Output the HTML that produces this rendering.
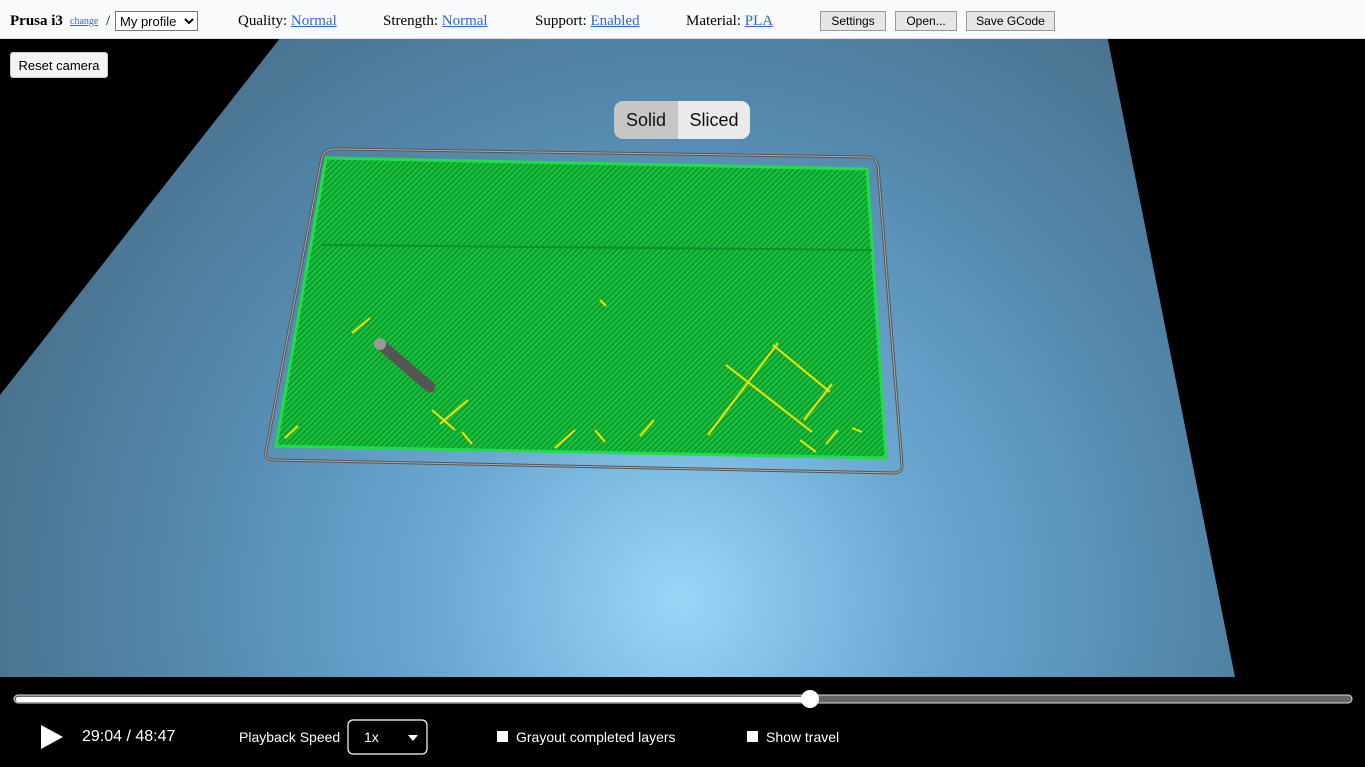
<!DOCTYPE html>
<html><head><meta charset="utf-8"><style>
body{margin:0;width:1365px;height:767px;background:#000;overflow:hidden;position:relative;font-family:"Liberation Serif",serif}
.top{position:absolute;left:0;top:0;width:1365px;height:38px;background:#f9fafc;font-size:15px;border-bottom:1px solid #ddd}
.top>span,.top>b,.top>a,.top>button,.top>select{position:absolute;top:13px;white-space:nowrap}
a{color:#3366dd;text-decoration:underline}
button{font-family:"Liberation Sans",sans-serif;font-size:12px;background:#e6e6e6;border:1px solid #999;height:20px;padding:0 4px;white-space:nowrap}
.sans{font-family:"Liberation Sans",sans-serif}
</style></head><body>
<svg width="1365" height="767" style="position:absolute;left:0;top:0">
<defs>
<radialGradient id="g" cx="680" cy="600" r="700" gradientUnits="userSpaceOnUse">
<stop offset="0" stop-color="#99d5f7"/><stop offset="0.35" stop-color="#6aa8d2"/><stop offset="0.7" stop-color="#5489ad"/><stop offset="1" stop-color="#4a7390"/></radialGradient>
<pattern id="st" width="4" height="4" patternUnits="userSpaceOnUse" patternTransform="rotate(45)"><rect width="4" height="4" fill="#18bf3c"/><rect width="1.2" height="4" fill="#0a8a28"/></pattern>
</defs>
<polygon points="310,0 1100,0 1235,677 0,677 0,395" fill="url(#g)"/>
<path d="M338,149 L868,157 Q877,158 878,167 L902,464 Q903,473 893,473 L274,460 Q264,460 266,451 L322,157 Q324,149 338,149 Z" fill="none" stroke="#555" stroke-width="3"/>
<path d="M338,149 L868,157 Q877,158 878,167 L902,464 Q903,473 893,473 L274,460 Q264,460 266,451 L322,157 Q324,149 338,149 Z" fill="none" stroke="#aaa" stroke-width="1"/>
<polygon points="326,158 867,169 886,458 276,446" fill="url(#st)" stroke="#22dd4a" stroke-width="3"/>
<line x1="322" y1="245" x2="872" y2="250" stroke="#0c8f2c" stroke-width="2"/>
<g stroke="#f2e200" stroke-width="2">
<line x1="726" y1="365" x2="812" y2="432"/><line x1="778" y1="343" x2="708" y2="435"/>
<line x1="773" y1="345" x2="830" y2="392"/><line x1="832" y1="384" x2="804" y2="420"/>
<line x1="432" y1="410" x2="455" y2="430"/><line x1="468" y1="400" x2="440" y2="424"/>
<line x1="352" y1="333" x2="370" y2="318"/><line x1="285" y1="438" x2="298" y2="426"/>
<line x1="555" y1="448" x2="575" y2="430"/><line x1="595" y1="430" x2="605" y2="442"/>
<line x1="640" y1="436" x2="654" y2="420"/><line x1="800" y1="440" x2="816" y2="452"/>
<line x1="826" y1="444" x2="838" y2="430"/><line x1="462" y1="432" x2="472" y2="444"/>
<line x1="852" y1="428" x2="862" y2="432"/><line x1="600" y1="300" x2="606" y2="306"/>
</g>
<line x1="380" y1="344" x2="430" y2="387" stroke="#555" stroke-width="11" stroke-linecap="round"/>
<circle cx="380" cy="344" r="6" fill="#999"/>
<rect x="14" y="695" width="1338" height="8" rx="4" fill="#666" stroke="#ddd" stroke-width="1"/>
<rect x="16" y="697" width="795" height="5" rx="2" fill="#fff"/>
<circle cx="810" cy="699" r="9" fill="#fff"/>
<polygon points="41,725 41,749 63,737" fill="#fff"/>
<rect x="348" y="720" width="79" height="34" rx="5" fill="none" stroke="#fff" stroke-width="1.2"/>
<polygon points="408,735 418,735 413,741" fill="#fff"/>
<rect x="497" y="731" width="11" height="11" fill="#fff"/><rect x="747" y="731" width="11" height="11" fill="#fff"/>
</svg>
<div class="top">
<b style="left:10px">Prusa i3</b>
<a style="left:70px;font-size:10px;top:16px">change</a>
<span style="left:106px">/</span>
<select style="left:115px;top:11px;height:20px;width:83px;font-family:'Liberation Sans',sans-serif;font-size:13px;border:1px solid #777;background:#fff"><option>My profile</option></select>
<span style="left:238px">Quality: <a>Normal</a></span>
<span style="left:383px">Strength: <a>Normal</a></span>
<span style="left:535px">Support: <a>Enabled</a></span>
<span style="left:686px">Material: <a>PLA</a></span>
<button style="left:820px;width:66px;top:11px">Settings</button>
<button style="left:895px;width:62px;top:11px">Open...</button>
<button style="left:966px;width:89px;top:11px">Save GCode</button>
</div>
<button style="position:absolute;left:10px;top:52px;height:26px;width:98px;font-size:13px;background:#f4f4f4;border:1px solid #ccc;border-radius:3px">Reset camera</button>
<div class="sans" style="position:absolute;left:614px;top:101px;height:38px;width:136px;border-radius:9px;overflow:hidden;font-size:18px;display:flex">
<div style="width:64px;background:#c6c6c6;color:#111;line-height:38px;text-align:center">Solid</div>
<div style="width:72px;background:#eaeaea;color:#111;line-height:38px;text-align:center">Sliced</div></div>
<div class="sans" style="position:absolute;color:#fff;font-size:16px;left:82px;top:728px">29:04 / 48:47</div>
<div class="sans" style="position:absolute;color:#fff;font-size:14px;left:239px;top:729px">Playback Speed</div>
<div class="sans" style="position:absolute;color:#fff;font-size:14px;left:364px;top:729px">1x</div>
<div class="sans" style="position:absolute;color:#fff;font-size:14px;left:516px;top:729px">Grayout completed layers</div>
<div class="sans" style="position:absolute;color:#fff;font-size:14px;left:766px;top:729px">Show travel</div>
</body></html>
